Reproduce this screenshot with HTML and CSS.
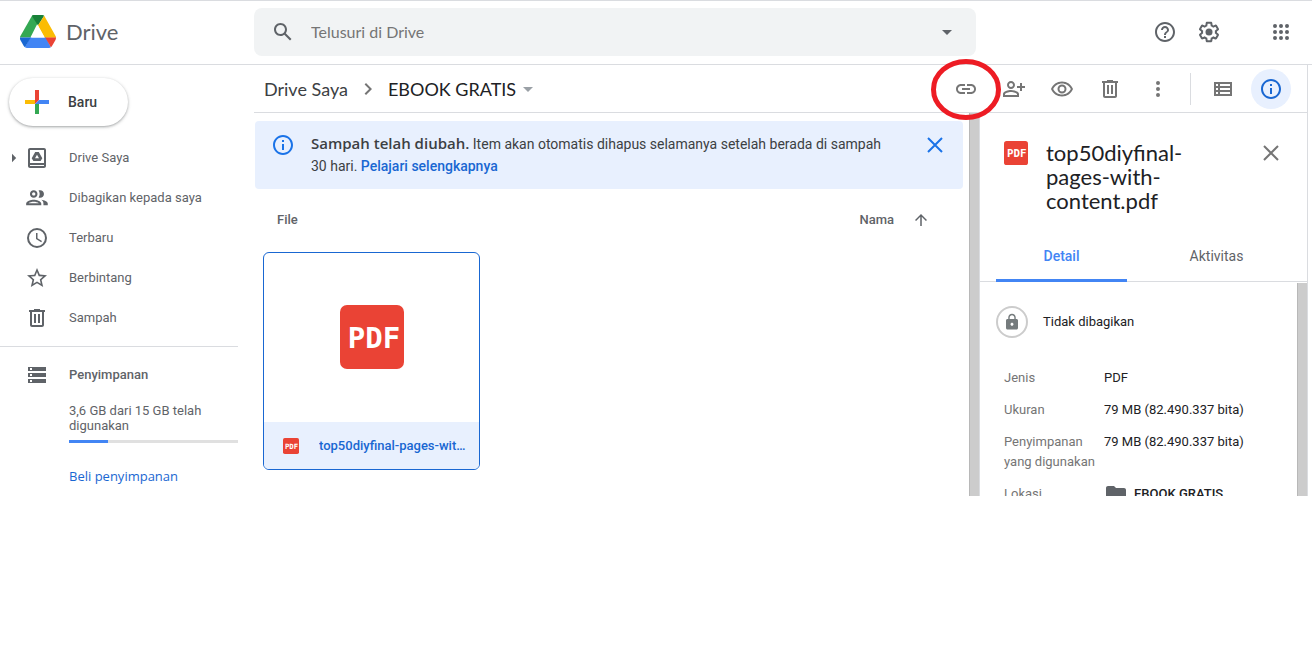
FILE: index.html
```
<!DOCTYPE html>
<html lang="id">
<head>
<meta charset="utf-8">
<title>EBOOK GRATIS - Drive</title>
<link rel="stylesheet" href="styles.css">
</head>
<body>
<svg class="sprite" aria-hidden="true">
  <symbol id="trash" viewBox="0 0 24 24"><path d="M15 4V3H9v1H4v2h1v13c0 1.100.9 2 2 2h10c1.100 0 2-.9 2-2V6h1V4h-5zm2 15H7V6h10v13zM9 8h2v9H9zm4 0h2v9h-2z"/></symbol>
  <symbol id="info" viewBox="0 0 24 24"><path d="M11 7h2v2h-2zm0 4h2v6h-2zm1-9C6.480 2 2 6.480 2 12s4.480 10 10 10 10-4.480 10-10S17.520 2 12 2zm0 18c-4.410 0-8-3.590-8-8s3.590-8 8-8 8 3.590 8 8-3.590 8-8 8z"/></symbol>
  <symbol id="caret" viewBox="0 0 24 24"><path d="M7 10l5 5 5-5z"/></symbol>
  <symbol id="close" viewBox="0 0 24 24"><path d="M5 5l14 14M19 5L5 19" fill="none" stroke="currentColor" stroke-width="2"/></symbol>
  <symbol id="pdf" viewBox="0 0 64 64"><rect width="64" height="64" rx="7" fill="#ea4335"/><text x="34" y="43" text-anchor="middle" class="pdf-label">PDF</text></symbol>
</svg>
<div class="app">
  <header class="header">
    <a class="brand" href="#">
      <svg class="logo" viewBox="0 0 36 33" aria-hidden="true">
        <path fill="#34a853" d="M12 .8C12.500.3 13 0 13.800 0L18 7.600 10.400 22.500H0c0-.5.1-.9.3-1.300z"/>
        <path fill="#188038" d="M13.800 0h8.600c.8 0 1.400.3 1.800.8L18 10.500 11.900.9c.5-.6 1.100-.9 1.900-.9z"/>
        <path fill="#fbbc04" d="M24.200.8l11.500 20.500c.3.500.3.900.3 1.500H24.500L18 10.500z"/>
        <path fill="#4285f4" d="M10 22.500h16L30.800 32.300c-.5.4-1.100.7-1.800.7H7c-.8 0-1.500-.3-2-.7z"/>
        <path fill="#1967d2" d="M0 22.500h10.800L5 32.300c-.7-.5-1.100-1-1.500-1.700L.4 25c-.4-.8-.5-1.600-.4-2.500z"/>
        <path fill="#ea4335" d="M25.200 22.500H36c0 .9-.1 1.700-.5 2.400l-3.200 5.700c-.4.700-.8 1.200-1.400 1.700z"/>
        <path fill="#fff" d="M18 10.500l6.800 12H11.200z"/>
      </svg>
      <span>Drive</span>
    </a>
    <form class="search" role="search">
      <button class="plain" type="button" aria-label="Telusuri"><svg class="icon" viewBox="0 0 24 24"><path d="M20.490 19l-5.730-5.730C15.530 12.200 16 10.910 16 9.500 16 5.910 13.090 3 9.500 3S3 5.910 3 9.500 5.910 16 9.500 16c1.410 0 2.700-.47 3.770-1.240L19 20.490 20.490 19zM5 9.500C5 7.010 7.010 5 9.500 5S14 7.010 14 9.500 11.990 14 9.500 14 5 11.990 5 9.500z"/></svg></button>
      <input type="text" placeholder="Telusuri di Drive" aria-label="Telusuri di Drive">
      <button class="plain" type="button" aria-label="Opsi penelusuran"><svg class="icon"><use href="#caret"/></svg></button>
    </form>
    <div class="header-tools">
      <button class="plain" type="button" aria-label="Bantuan"><svg class="icon" viewBox="0 0 24 24"><path d="M11 18h2v-2h-2v2zm1-16C6.480 2 2 6.480 2 12s4.480 10 10 10 10-4.480 10-10S17.520 2 12 2zm0 18c-4.410 0-8-3.590-8-8s3.590-8 8-8 8 3.590 8 8-3.590 8-8 8zm0-14c-2.210 0-4 1.790-4 4h2c0-1.100.9-2 2-2s2 .9 2 2c0 2-3 1.750-3 5h2c0-2.250 3-2.500 3-5 0-2.210-1.790-4-4-4z"/></svg></button>
      <button class="plain" type="button" aria-label="Setelan"><svg class="icon" viewBox="0 0 24 24"><path d="M13.850 22.250h-3.700c-.74 0-1.360-.54-1.450-1.270l-.27-1.890c-.27-.14-.53-.29-.79-.46l-1.800.72c-.7.260-1.470-.03-1.810-.65L2.200 15.530c-.35-.66-.2-1.440.36-1.880l1.530-1.190c-.01-.15-.02-.3-.02-.46 0-.15.010-.31.020-.46l-1.520-1.190c-.59-.45-.74-1.260-.37-1.880l1.850-3.190c.34-.62 1.110-.9 1.790-.63l1.810.73c.26-.17.520-.32.780-.46l.27-1.910c.09-.7.710-1.250 1.440-1.250h3.700c.74 0 1.360.540 1.450 1.270l.27 1.890c.27.140.53.290.79.460l1.800-.72c.71-.26 1.480.030 1.820.650l1.840 3.180c.36.660.2 1.440-.36 1.880l-1.520 1.190c.01.150.02.300.02.460s-.01.310-.02.460l1.520 1.190c.56.450.72 1.230.37 1.860l-1.860 3.220c-.34.620-1.110.9-1.800.630l-1.800-.72c-.26.170-.52.320-.78.460l-.27 1.910c-.1.680-.72 1.220-1.460 1.220zm-3.230-2h2.760l.37-2.550.53-.22c.44-.18.880-.44 1.340-.78l.45-.34 2.380.960 1.380-2.400-2.030-1.580.07-.56c.03-.26.060-.51.060-.78s-.03-.53-.06-.78l-.07-.56 2.030-1.580-1.390-2.400-2.390.960-.45-.35c-.42-.32-.87-.58-1.330-.77l-.52-.22-.37-2.550h-2.760l-.37 2.550-.53.210c-.44.190-.88.440-1.340.790l-.45.330-2.380-.95-1.390 2.390 2.030 1.580-.07.560a7 7 0 0 0-.06.790c0 .260.020.530.060.780l.07.560-2.030 1.580 1.380 2.400 2.390-.96.450.350c.43.330.86.580 1.330.770l.53.220z"/><circle cx="12" cy="12" r="3.500"/></svg></button>
      <button class="plain apps" type="button" aria-label="Aplikasi Google"><svg class="icon" viewBox="0 0 24 24"><path d="M6 8a2 2 0 1 0 0-4 2 2 0 0 0 0 4zm6 12a2 2 0 1 0 0-4 2 2 0 0 0 0 4zm-6 0a2 2 0 1 0 0-4 2 2 0 0 0 0 4zm0-6a2 2 0 1 0 0-4 2 2 0 0 0 0 4zm6 0a2 2 0 1 0 0-4 2 2 0 0 0 0 4zm6-6a2 2 0 1 0 0-4 2 2 0 0 0 0 4zm-6 0a2 2 0 1 0 0-4 2 2 0 0 0 0 4zm6 6a2 2 0 1 0 0-4 2 2 0 0 0 0 4zm0 6a2 2 0 1 0 0-4 2 2 0 0 0 0 4z"/></svg></button>
    </div>
  </header>
  <div class="body">
    <nav class="sidebar">
      <button class="new" type="button"><svg class="plus" viewBox="0 0 24 24" aria-hidden="true"><path fill="#ea4335" d="M10 0h4v10l-4 4z"/><path fill="#fbbc04" d="M0 10h10v4H0z"/><path fill="#4285f4" d="M14 10h10v4H10z"/><path fill="#34a853" d="M10 14h4v10h-4z"/></svg>Baru</button>
      <ul class="nav">
        <li><a href="#"><svg class="expander" viewBox="0 0 6 10"><path d="M0 0l5 5-5 5z"/></svg><svg class="icon" viewBox="0 0 24 24"><path d="M19 2H5c-1.100 0-2 .9-2 2v16c0 1.100.9 2 2 2h14c1.100 0 2-.9 2-2V4c0-1.100-.9-2-2-2zm0 18H5v-1h14v1zm0-3H5V4h14v13z"/><path fill-rule="evenodd" d="M10.200 6h3.600l3.500 6.200-1.700 2.800H8.400l-1.700-2.800zM12 8.800l-2 3.400h4z"/></svg>Drive Saya</a></li>
        <li><a href="#"><svg class="icon" viewBox="0 0 24 24"><path d="M9 13.750c-2.340 0-7 1.170-7 3.500V19h14v-1.750c0-2.330-4.660-3.500-7-3.500zM4.340 17c.84-.58 2.870-1.250 4.660-1.250s3.820.67 4.660 1.250H4.340zM9 12c1.930 0 3.500-1.570 3.500-3.500S10.930 5 9 5 5.500 6.570 5.500 8.500 7.070 12 9 12zm0-5c.83 0 1.500.67 1.500 1.500S9.830 10 9 10s-1.500-.67-1.500-1.500S8.170 7 9 7zm7.040 6.810c1.160.84 1.960 1.960 1.960 3.440V19h4v-1.750c0-2.020-3.500-3.170-5.960-3.440zM15 12c1.930 0 3.500-1.570 3.500-3.500S16.930 5 15 5c-.54 0-1.040.13-1.500.35.630.89 1 1.980 1 3.150s-.37 2.260-1 3.150c.46.220.96.350 1.500.350z" transform="translate(-1 -1.200) scale(1.080)"/></svg>Dibagikan kepada saya</a></li>
        <li><a href="#"><svg class="icon" viewBox="0 0 24 24"><path d="M12 2a10 10 0 1 0 0 20 10 10 0 0 0 0-20zm0 18a8 8 0 1 1 0-16 8 8 0 0 1 0 16zm.5-13H11v6l5.200 3.200.8-1.300-4.500-2.700z"/></svg>Terbaru</a></li>
        <li><a href="#"><svg class="icon" viewBox="0 0 24 24"><path d="M22 9.240l-7.190-.62L12 2 9.190 8.630 2 9.240l5.460 4.730L5.820 21 12 17.270 18.180 21l-1.630-7.030L22 9.240zM12 15.400l-3.760 2.270 1-4.280-3.320-2.880 4.380-.38L12 6.100l1.710 4.040 4.380.38-3.320 2.880 1 4.280L12 15.400z"/></svg>Berbintang</a></li>
        <li><a href="#"><svg class="icon"><use href="#trash"/></svg>Sampah</a></li>
      </ul>
      <section class="storage">
        <a class="storage-title" href="#"><svg class="icon" viewBox="0 0 24 24"><path fill-rule="evenodd" d="M3 20h18v-4H3v4zm2-3h2v2H5v-2zM3 4v4h18V4H3zm4 3H5V5h2v2zm-4 7h18v-4H3v4zm2-3h2v2H5v-2z"/></svg>Penyimpanan</a>
        <div class="storage-body">
          <label for="quota">3,6 GB dari 15 GB telah digunakan</label>
          <progress id="quota" max="100" value="23"></progress>
          <a class="buy" href="#">Beli penyimpanan</a>
        </div>
      </section>
    </nav>
    <div class="workspace">
      <div class="toolbar">
        <div class="crumbs">
          <a href="#">Drive Saya</a>
          <svg class="icon chevron" viewBox="0 0 24 24"><path d="M10 6L8.590 7.410 13.170 12l-4.580 4.590L10 18l6-6z"/></svg>
          <button class="plain current" type="button">EBOOK GRATIS<svg class="icon"><use href="#caret"/></svg></button>
        </div>
        <div class="actions">
          <button class="plain marked" type="button" aria-label="Dapatkan link"><svg class="icon" viewBox="0 0 24 24"><path d="M3.900 12c0-1.710 1.390-3.100 3.100-3.100h4V7H7c-2.760 0-5 2.240-5 5s2.240 5 5 5h4v-1.900H7c-1.710 0-3.100-1.390-3.100-3.100zM8 13h8v-2H8v2zm9-6h-4v1.900h4c1.710 0 3.100 1.390 3.100 3.100s-1.390 3.100-3.100 3.100h-4V17h4c2.760 0 5-2.240 5-5s-2.240-5-5-5z"/></svg><svg class="ring" viewBox="0 0 70 61" aria-hidden="true"><ellipse cx="35" cy="30.500" rx="32.500" ry="28"/></svg></button>
          <button class="plain" type="button" aria-label="Bagikan"><svg class="icon" viewBox="0 0 24 24"><path d="M9 12c2.210 0 4-1.790 4-4s-1.790-4-4-4-4 1.790-4 4 1.790 4 4 4zm0-6c1.100 0 2 .9 2 2s-.9 2-2 2-2-.9-2-2 .9-2 2-2zm0 7c-2.670 0-8 1.340-8 4v3h16v-3c0-2.660-5.330-4-8-4zm6 5H3v-1c.2-.71 3.300-2 6-2s5.800 1.290 6 2v1zm5-8V6h-2v3h-3v2h3v3h2v-3h3V9h-3z"/></svg></button>
          <button class="plain" type="button" aria-label="Pratinjau"><svg class="icon" viewBox="0 0 24 24"><path d="M12 4.500C7 4.500 2.700 7.600 1 12c1.700 4.400 6 7.500 11 7.500s9.300-3.100 11-7.500c-1.700-4.400-6-7.500-11-7.500zm0 13c-3.800 0-7.200-2.100-8.800-5.500C4.800 8.600 8.200 6.500 12 6.500s7.200 2.100 8.800 5.500c-1.600 3.400-5 5.500-8.800 5.500zm0-10a4.500 4.500 0 1 0 0 9 4.500 4.500 0 0 0 0-9zm0 7a2.500 2.500 0 1 1 0-5 2.500 2.500 0 0 1 0 5z"/></svg></button>
          <button class="plain" type="button" aria-label="Hapus"><svg class="icon"><use href="#trash"/></svg></button>
          <button class="plain" type="button" aria-label="Tindakan lainnya"><svg class="icon" viewBox="0 0 24 24"><path d="M12 8a2 2 0 1 0 0-4 2 2 0 0 0 0 4zm0 2a2 2 0 1 0 0 4 2 2 0 0 0 0-4zm0 6a2 2 0 1 0 0 4 2 2 0 0 0 0-4z"/></svg></button>
          <span class="separator"></span>
          <button class="plain" type="button" aria-label="Tampilan daftar"><svg class="icon" viewBox="0 0 24 24"><path fill-rule="evenodd" d="M3 5v14h18V5H3zm4 2v2H5V7h2zm-2 6v-2h2v2H5zm0 2h2v2H5v-2zm14 2H9v-2h10v2zm0-4H9v-2h10v2zm0-4H9V7h10v2z"/></svg></button>
          <button class="plain active" type="button" aria-label="Lihat detail"><svg class="icon"><use href="#info"/></svg></button>
        </div>
      </div>
      <div class="panes">
        <main class="files">
          <div class="banner">
            <svg class="icon"><use href="#info"/></svg>
            <p><strong>Sampah telah diubah.</strong> Item akan otomatis dihapus selamanya setelah berada di sampah 30 hari. <a href="#">Pelajari selengkapnya</a></p>
            <button class="plain" type="button" aria-label="Tutup"><svg class="icon"><use href="#close"/></svg></button>
          </div>
          <div class="list-head">
            <h2>File</h2>
            <button class="plain sort" type="button">Nama<svg class="sort-arrow" viewBox="0 0 24 24"><path d="M4 12l1.410 1.410L11 7.830V20h2V7.830l5.580 5.590L20 12l-8-8z"/></svg></button>
          </div>
          <article class="card">
            <div class="thumb"><svg class="pdf-large"><use href="#pdf"/></svg></div>
            <div class="card-name"><svg class="pdf-small"><use href="#pdf"/></svg><span>top50diyfinal-pages-with-content.pdf</span></div>
          </article>
        </main>
        <div class="scrollbar"></div>
        <aside class="details">
          <div class="details-head">
            <svg class="pdf-medium"><use href="#pdf"/></svg>
            <h1>top50diyfinal-pages-with-content.pdf</h1>
            <button class="plain" type="button" aria-label="Tutup detail"><svg class="icon"><use href="#close"/></svg></button>
          </div>
          <div class="tabs" role="tablist">
            <button class="tab selected" type="button" role="tab" aria-selected="true">Detail</button>
            <button class="tab" type="button" role="tab" aria-selected="false">Aktivitas</button>
          </div>
          <div class="details-scroll">
            <div class="details-body">
              <div class="sharing"><span class="lock"><svg viewBox="0 0 24 24"><path fill-rule="evenodd" d="M18 8h-1V6c0-2.760-2.240-5-5-5S7 3.240 7 6v2H6c-1.100 0-2 .9-2 2v10c0 1.100.9 2 2 2h12c1.100 0 2-.9 2-2V10c0-1.100-.9-2-2-2zm-6 9c-1.100 0-2-.9-2-2s.9-2 2-2 2 .9 2 2-.9 2-2 2zM8.900 8V6c0-1.710 1.390-3.100 3.100-3.100s3.100 1.390 3.100 3.100v2z"/></svg></span>Tidak dibagikan</div>
              <table class="facts">
                <tr><th scope="row">Jenis</th><td>PDF</td></tr>
                <tr><th scope="row">Ukuran</th><td>79 MB (82.490.337 bita)</td></tr>
                <tr><th scope="row">Penyimpanan yang digunakan</th><td>79 MB (82.490.337 bita)</td></tr>
                <tr><th scope="row">Lokasi</th><td><a class="place" href="#"><svg class="icon" viewBox="0 0 24 24"><path d="M10 4H4c-1.100 0-2 .9-2 2v12c0 1.100.9 2 2 2h16c1.100 0 2-.9 2-2V8c0-1.100-.9-2-2-2h-8z"/></svg>EBOOK GRATIS</a></td></tr>
              </table>
            </div>
            <div class="scrollbar"></div>
          </div>
        </aside>
      </div>
    </div>
  </div>
</div>
</body>
</html>
```

FILE: styles.css
```
:root {
  --grey: #5f6368;
  --line: #dadce0;
  --blue: #1967d2;
  --tint: #e8f0fe;
  --display: Lato, "Open Sans", sans-serif;
}
* { box-sizing: border-box; }
body {
  margin: 0;
  background: #fff;
  color: #202124;
  font: 13px/20px Roboto, "Liberation Sans", sans-serif;
}
a { color: inherit; text-decoration: none; }
h1, h2, p, ul { margin: 0; padding: 0; font-weight: 400; }
ul { list-style: none; }
.sprite { display: none; }
.icon { display: block; flex: none; width: 24px; height: 24px; fill: currentColor; }
.plain {
  display: flex;
  align-items: center;
  justify-content: center;
  padding: 0;
  border: 0;
  background: none;
  color: inherit;
  font: inherit;
}
.pdf-label { fill: #fff; font: 700 29px "DejaVu Sans Mono", monospace; }

.app {
  display: flex;
  flex-direction: column;
  height: calc(100vh - 152px);
  overflow: hidden;
  border-top: 1px solid var(--line);
}
.header {
  display: flex;
  flex: none;
  align-items: center;
  height: 64px;
  padding-bottom: 2px;
  border-bottom: 1px solid var(--line);
  color: var(--grey);
}
.brand {
  display: flex;
  flex: none;
  align-items: center;
  gap: 10px;
  width: 254px;
  padding-left: 20px;
  font: 22px/24px var(--display);
}
.logo { width: 36px; height: 33px; }
.search {
  display: flex;
  flex: 0 1 722px;
  align-items: center;
  gap: 16px;
  height: 48px;
  padding: 0 17px;
  border-radius: 8px;
  background: #f1f3f4;
}
.search input {
  flex: 1;
  min-width: 0;
  padding: 0;
  border: 0;
  background: none;
  font: 16px/24px var(--display);
}
.search input::placeholder { color: #757575; opacity: 1; }
.header-tools { display: flex; gap: 20px; margin-left: auto; padding-right: 19px; }
.apps { margin-left: 28px; }

.body { display: flex; flex: 1; min-height: 0; }
.sidebar { flex: none; width: 254px; padding: 13px 16px 0 0; color: var(--grey); font-weight: 500; }
.new {
  display: flex;
  align-items: center;
  gap: 19px;
  height: 48px;
  margin-left: 9px;
  padding: 0 31px 0 16px;
  border: 0;
  border-radius: 24px;
  background: #fff;
  box-shadow: 0 1px 2px rgba(60, 64, 67, .3), 0 1px 3px 1px rgba(60, 64, 67, .15);
  color: #3c4043;
  font: 500 14px/20px Roboto, sans-serif;
}
.plus { width: 24px; height: 24px; }
.nav { padding: 12px 0 8px; }
.nav a, .storage-title {
  display: flex;
  position: relative;
  align-items: center;
  gap: 20px;
  height: 40px;
  padding-left: 25px;
}
.expander { position: absolute; left: 12px; width: 5px; height: 10px; fill: currentColor; }
.storage { padding-top: 8px; border-top: 1px solid var(--line); }
.storage-body { display: flex; flex-direction: column; padding: 8px 0 0 69px; font-weight: 400; line-height: 15px; }
.storage-body progress {
  width: 100%;
  height: 3px;
  margin: 7px 0 23px;
  border: 0;
  appearance: none;
}
progress::-webkit-progress-bar { background: #e0e0e0; }
progress::-webkit-progress-value { background: #4285f4; }
.buy { color: var(--blue); font: 500 13px/20px "Open Sans", sans-serif; }

.workspace {
  display: flex;
  flex: 1;
  flex-direction: column;
  min-width: 0;
  margin-right: 4px;
  border-right: 1px solid var(--line);
}
.toolbar {
  display: flex;
  flex: none;
  align-items: center;
  justify-content: space-between;
  height: 48px;
  padding: 0 16px 0 10px;
  border-bottom: 1px solid var(--line);
}
.crumbs { display: flex; align-items: center; color: #3c4043; font: 18px/24px var(--display); }
.chevron { margin: 0 8px; color: #757575; }
.current { color: #202124; }
.current .icon { color: #9aa0a6; }
.actions { display: flex; align-items: center; gap: 8px; color: #757575; }
.actions .plain { width: 40px; height: 40px; border-radius: 50%; }
.actions .active { background: var(--tint); color: var(--blue); }
.separator { width: 1px; height: 32px; margin: 0 4px; background: var(--line); }
.marked { position: relative; }
.ring { position: absolute; top: -10px; left: -15px; width: 70px; height: 61px; fill: none; stroke: #ed1c24; stroke-width: 5; z-index: 1; }

.panes { display: flex; flex: 1; min-height: 0; }
.files { flex: 1; min-width: 0; padding: 8px 6px 0 1px; }
.scrollbar { flex: none; width: 10px; background: #ccc; border-left: 1px solid #b8b8b8; }
.banner {
  display: flex;
  align-items: flex-start;
  gap: 16px;
  min-height: 68px;
  padding: 12px 16px;
  border-radius: 4px;
  background: var(--tint);
  color: #1a73e8;
}
.banner p { flex: 1; padding-right: 8px; color: #3c4043; font-size: 14px; line-height: 22px; }
.banner strong { font: 600 15px/20px "Open Sans", sans-serif; }
.banner a { color: var(--blue); font-weight: 500; }
.list-head {
  display: flex;
  align-items: center;
  justify-content: space-between;
  margin: 21px 33px 22px 22px;
  color: var(--grey);
}
.list-head h2 { font: 500 13px/20px Roboto, sans-serif; }
.sort { gap: 18px; font-weight: 500; }
.sort-arrow { width: 18px; height: 18px; fill: currentColor; }
.card {
  width: 217px;
  margin-left: 8px;
  overflow: hidden;
  border: 1px solid var(--blue);
  border-radius: 6px;
}
.thumb { display: grid; place-items: center; height: 169px; padding-bottom: 2px; }
.pdf-large { width: 64px; height: 64px; }
.pdf-medium { flex: none; width: 24px; height: 24px; }
.pdf-small { flex: none; width: 16px; height: 16px; }
.card-name {
  display: flex;
  align-items: center;
  gap: 20px;
  height: 47px;
  padding: 0 8px 0 19px;
  background: var(--tint);
  color: var(--blue);
  font-weight: 500;
}
.card-name span { overflow: hidden; text-overflow: ellipsis; white-space: nowrap; }

.details { display: flex; flex: none; flex-direction: column; width: 328px; border-left: 1px solid var(--line); }
.details-head { display: flex; align-items: flex-start; gap: 18px; padding: 28px 24px 20px; }
.details-head h1 { flex: 0 1 160px; font: 22px/24px var(--display); }
.details-head .plain { margin-left: auto; color: #757575; }
.tabs { display: flex; flex: none; gap: 24px; height: 49px; padding: 0 16px; border-bottom: 1px solid var(--line); }
.tab {
  flex: 0 0 131px;
  height: 49px;
  padding: 0;
  border: 0;
  border-bottom: 3px solid transparent;
  background: none;
  color: var(--grey);
  font: 14px/20px Roboto, sans-serif;
}
.tab.selected { border-color: #4285f4; color: #4285f4; font-weight: 500; }
.details-scroll { display: flex; flex: 1; min-height: 0; padding-top: 1px; overflow: hidden; }
.details-body { flex: 1; padding: 23px 0 0 16px; }
.sharing { display: flex; align-items: center; gap: 15px; }
.lock { display: grid; place-items: center; width: 32px; height: 32px; border: 2px solid #ccc; border-radius: 50%; }
.lock svg { width: 18px; height: 18px; fill: #757b7d; }
.facts { margin: 24px 0 0 8px; border-collapse: collapse; }
.facts th { width: 100px; padding: 6px 8px 6px 0; color: #757575; font-weight: 400; text-align: left; vertical-align: top; }
.facts td { padding: 6px 0; vertical-align: top; }
.place { display: flex; align-items: center; gap: 6px; height: 20px; font-weight: 500; }
.place .icon { color: var(--grey); }
```
